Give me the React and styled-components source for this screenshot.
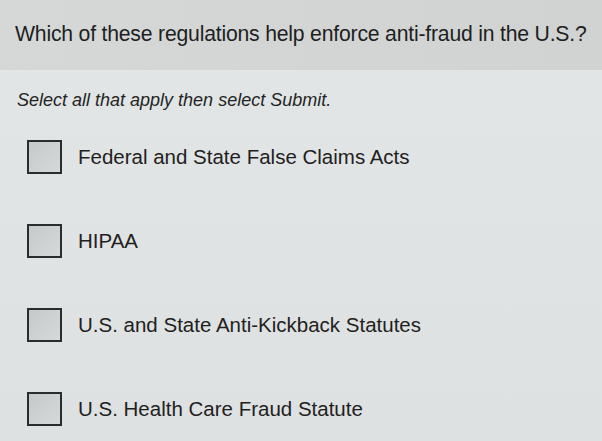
import React, {useState} from 'react';
import styled, {createGlobalStyle} from 'styled-components';

const Global = createGlobalStyle`
  html, body {
    margin: 0;
    padding: 0;
    background: #e0e3e3;
  }
  body {
    font-family: "Liberation Sans", Arial, sans-serif;
    color: #1f2121;
  }
`;

const Page = styled.div`
  width: 602px;
  height: 441px;
  overflow: hidden;
  background: linear-gradient(180deg, #e3e6e6 0%, #dde1e1 100%);
`;

const Header = styled.div`
  height: 70px;
  background: linear-gradient(90deg, #d6d8d8 0%, #d1d3d3 100%);
  display: flex;
  align-items: center;
  padding: 0 0 2px 15px;
  box-sizing: border-box;
`;

const Question = styled.h1`
  margin: 0;
  font-size: 21.2px;
  font-weight: normal;
  letter-spacing: -0.2px;
  color: #1d1f1f;
`;

const Content = styled.div`
  padding: 20px 0 0 17px;
`;

const Hint = styled.p`
  margin: 0 0 29px;
  font-size: 18px;
  line-height: 21px;
  font-style: italic;
  color: #222424;
`;

const List = styled.div`
  display: flex;
  flex-direction: column;
  gap: 50px;
  padding-left: 10px;
`;

const Option = styled.label`
  display: flex;
  align-items: center;
  gap: 16px;
  cursor: pointer;
  font-size: 20.5px;
  color: #1f2121;
`;

const Box = styled.span`
  width: 31px;
  height: 30px;
  border: 2px solid #2b2d2d;
  background: ${p => (p.checked ? '#8a9090' : 'linear-gradient(135deg, #c6c9c9, #d6d9d9)')};
  flex-shrink: 0;
`;

const options = [
  'Federal and State False Claims Acts',
  'HIPAA',
  'U.S. and State Anti-Kickback Statutes',
  'U.S. Health Care Fraud Statute',
];

function App() {
  const [checked, setChecked] = useState({});

  return (
    <Page>
      <Global/>
      <Header>
        <Question>Which of these regulations help enforce anti-fraud in the U.S.?</Question>
      </Header>

      <Content>
        <Hint>Select all that apply then select Submit.</Hint>

        <List>
          {options.map(o => (
            <Option key={o} onClick={() => setChecked({...checked, [o]: !checked[o]})}>
              <Box checked={checked[o]}/>
              {o}
            </Option>
          ))}
        </List>
      </Content>
    </Page>
  );
}

export default App;
